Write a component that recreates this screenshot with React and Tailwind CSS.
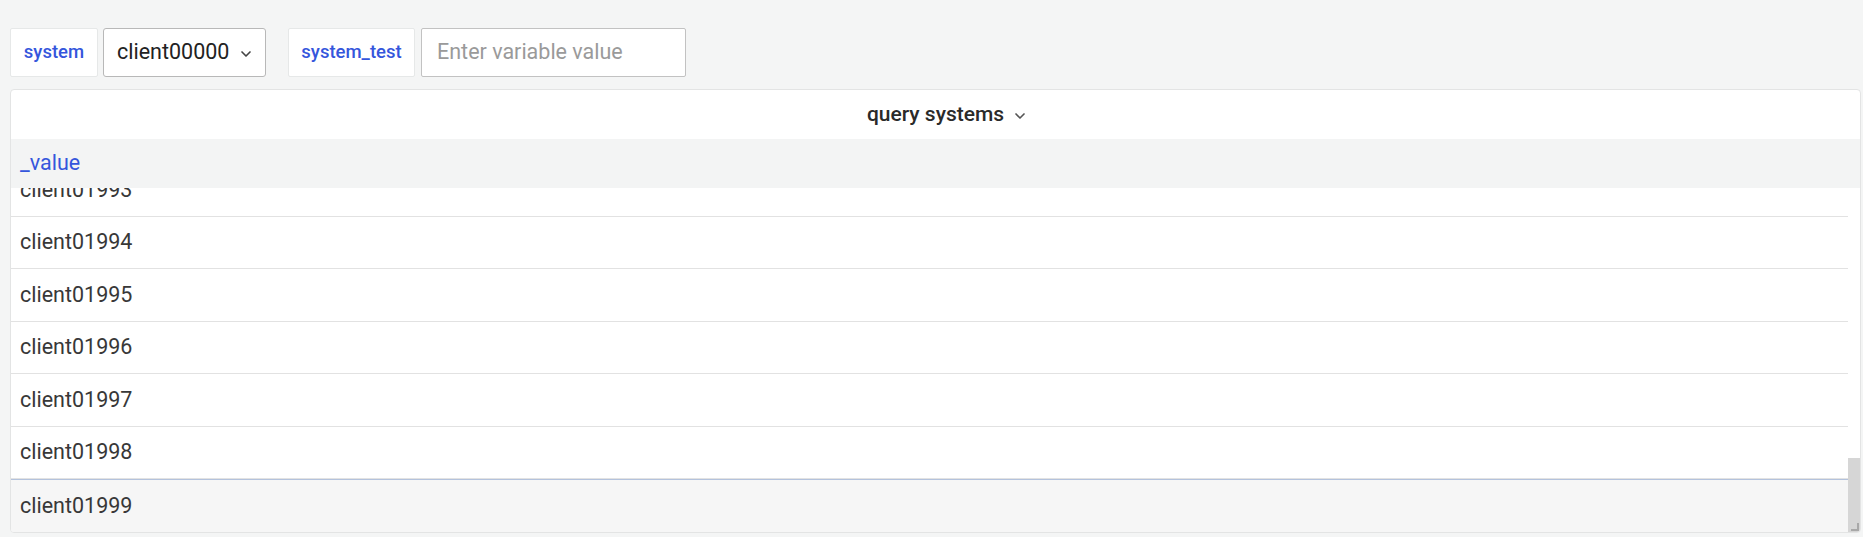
import { ChevronDown } from "lucide-react";

const rows = ["client01993", "client01994", "client01995", "client01996", "client01997", "client01998", "client01999"];

export default function App() {
  return (
    <div className="min-h-[537px] bg-[#f4f5f5] pl-[10px] pr-[2px] pt-[28px] font-['Roboto',sans-serif]">
      {/* variable controls */}
      <div className="flex h-[49px] items-stretch">
        <div className="flex w-[88px] items-center justify-center rounded-[2px] border border-[#e6e8e8] bg-white text-[18.5px] font-medium text-[#3556dc]">
          system
        </div>
        <button className="ml-[5px] flex w-[163px] items-center gap-[9px] rounded-[3px] border border-[#b8b8b8] bg-white pl-[13px] text-[21.5px] text-[#222]">
          client00000
          <ChevronDown size={16} strokeWidth={2.5} className="mt-[2px] text-[#444]" />
        </button>
        <div className="ml-[22px] flex w-[127px] items-center justify-center rounded-[2px] border border-[#e6e8e8] bg-white text-[18.5px] font-medium text-[#3556dc]">
          system_test
        </div>
        <input
          placeholder="Enter variable value"
          className="ml-[6px] w-[265px] rounded-[2px] border border-[#c2c2c2] bg-white px-[15px] text-[21.5px] text-[#222] outline-none placeholder:text-[#9a9a9a]"
        />
      </div>

      {/* panel */}
      <div className="mt-[12px] overflow-hidden rounded-[4px] border border-[#e3e4e4] bg-white">
        <div className="flex h-[49px] items-center justify-center gap-[8px] text-[21px] font-medium text-[#2a2a2a]">
          <span className="w-[16px]" />
          query systems
          <ChevronDown size={16} strokeWidth={2.5} className="mt-[2px] text-[#555]" />
        </div>
        <div className="flex h-[49px] items-center bg-[#f3f4f4] pl-[9px] text-[21.5px] text-[#3556dc]">
          _value
        </div>
        <div className="flex h-[344px]">
          <div className="flex flex-1 flex-col justify-end overflow-hidden">
            {rows.map((r, i) =>
              i === rows.length - 1 ? (
                <div
                  key={r}
                  className="flex h-[53px] shrink-0 items-center border-t border-[#b3c2dc] bg-[#f6f6f6] pl-[9px] text-[21.5px] text-[#383838]"
                >
                  {r}
                </div>
              ) : (
                <div
                  key={r}
                  className="flex h-[52.5px] shrink-0 items-center border-b border-[#e2e2e2] pl-[9px] text-[21.5px] text-[#383838]"
                >
                  {r}
                </div>
              )
            )}
          </div>
          <div className="flex w-[12px] flex-col justify-end">
            <div className="relative h-[74px] bg-[#d6d6d6]">
              <div className="absolute bottom-[1px] right-[1px] h-[8px] w-[8px] border-b-2 border-r-2 border-[#a8a8a8]" />
            </div>
          </div>
        </div>
      </div>
    </div>
  );
}
